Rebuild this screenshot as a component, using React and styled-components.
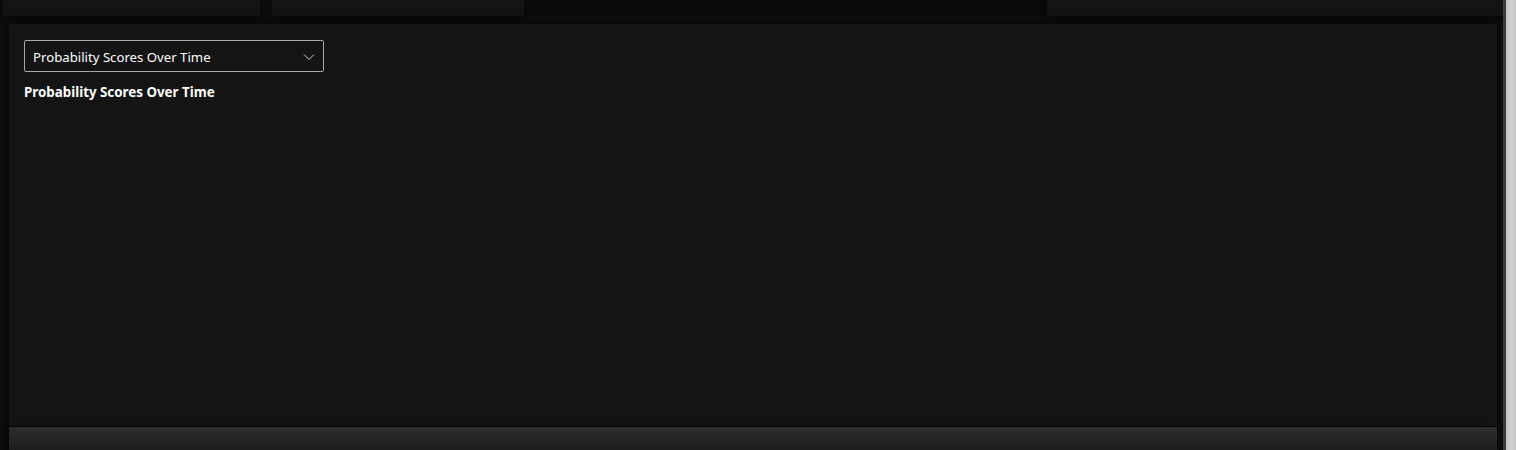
import React from 'react';
import styled, { createGlobalStyle } from 'styled-components';

const GlobalStyle = createGlobalStyle`
  html, body {
    margin: 0;
    padding: 0;
    background: #0c0c0c;
    overflow: hidden;
  }
  body {
    font-family: 'Noto Sans', 'Open Sans', sans-serif;
  }
`;

const Frame = styled.div`
  display: flex;
  width: 1516px;
  height: 450px;
  overflow: hidden;
`;

const Viewport = styled.div`
  flex: 1;
  display: flex;
  flex-direction: column;
  overflow: hidden;
  background: #0d0d0d;
`;

const Scrollbar = styled.div`
  width: 13px;
  flex-shrink: 0;
  border-left: 3px solid #3a3a3a;
  box-sizing: border-box;
  background: linear-gradient(90deg, #bdbdbd, #d4d4d4 50%, #c4c4c4);
`;

const CardRow = styled.div`
  display: flex;
  height: 16px;
  padding: 0 0 0 3px;
  flex-shrink: 0;
`;

const TopCard = styled.div`
  width: ${(p) => p.$w}px;
  margin-right: ${(p) => p.$gap || 0}px;
  background: ${(p) => (p.$dark ? '#0a0a0a' : '#131313')};
  box-shadow: ${(p) => (p.$dark ? 'none' : '0 2px 6px rgba(0,0,0,0.6)')};
  flex-shrink: 0;
`;

const Panel = styled.section`
  margin: 8px 6px 0 9px;
  height: 402px;
  background: #141414;
  box-shadow: 0 0 8px rgba(0, 0, 0, 0.7);
  padding: 16px 15px;
  box-sizing: border-box;
  flex-shrink: 0;
`;

const NextCard = styled.div`
  margin: 1px 6px 0 9px;
  flex: 1;
  background: linear-gradient(180deg, #2d2d2d, #1d1d1d);
  box-shadow: -6px 0 10px rgba(0, 0, 0, 0.6);
`;

const Select = styled.div`
  width: 300px;
  height: 32px;
  box-sizing: border-box;
  border: 1px solid #a8a8a8;
  border-radius: 2px;
  display: flex;
  align-items: center;
  justify-content: space-between;
  padding: 1px 8px 0 8px;
  color: #ffffff;
  font-size: 13.2px;
  background: #141414;
`;

const Title = styled.h3`
  margin: 11px 0 0 0;
  color: #ffffff;
  font-size: 13.35px;
  font-weight: 700;
`;

const Chevron = () => (
  <svg width="12" height="8" viewBox="0 0 12 8" fill="none">
    <path d="M1 1.5 L6 6.5 L11 1.5" stroke="#c8c8c8" strokeWidth="1" />
  </svg>
);

export default function App() {
  return (
    <>
      <GlobalStyle />
      <Frame>
        <Viewport>
          <CardRow>
            <TopCard $w={257} $gap={12} />
            <TopCard $w={252} />
            <TopCard $w={523} $dark />
            <TopCard $w={456} />
          </CardRow>
          <Panel>
            <Select>
              <span>Probability Scores Over Time</span>
              <Chevron />
            </Select>
            <Title>Probability Scores Over Time</Title>
          </Panel>
          <NextCard />
        </Viewport>
        <Scrollbar />
      </Frame>
    </>
  );
}
